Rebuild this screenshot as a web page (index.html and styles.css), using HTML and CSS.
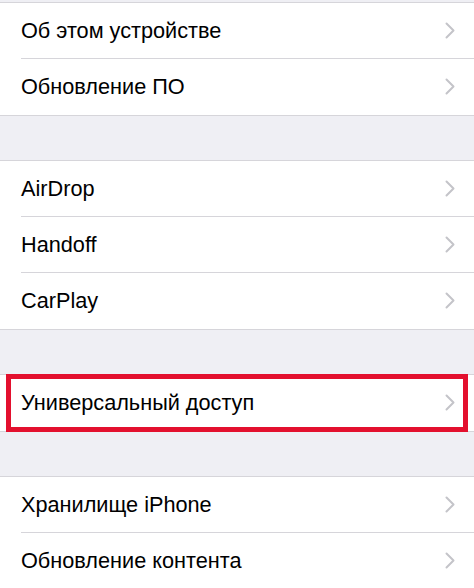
FILE: index.html
```html
<!DOCTYPE html>
<html lang="ru">
<head>
<meta charset="utf-8">
<meta name="viewport" content="width=device-width,initial-scale=1">
<title>Основные</title>
<link rel="stylesheet" href="styles.css">
</head>
<body>

<div class="group">
  <a class="row"><span class="cell">Об этом устройстве<svg class="chev" viewBox="0 0 10 17"><path d="M1.5 1.5l7 7-7 7"/></svg></span></a>
  <a class="row"><span class="cell">Обновление ПО<svg class="chev" viewBox="0 0 10 17"><path d="M1.5 1.5l7 7-7 7"/></svg></span></a>
</div>

<div class="group">
  <a class="row"><span class="cell">AirDrop<svg class="chev" viewBox="0 0 10 17"><path d="M1.5 1.5l7 7-7 7"/></svg></span></a>
  <a class="row"><span class="cell">Handoff<svg class="chev" viewBox="0 0 10 17"><path d="M1.5 1.5l7 7-7 7"/></svg></span></a>
  <a class="row"><span class="cell">CarPlay<svg class="chev" viewBox="0 0 10 17"><path d="M1.5 1.5l7 7-7 7"/></svg></span></a>
</div>

<div class="group">
  <a class="row marked"><span class="cell">Универсальный доступ<svg class="chev" viewBox="0 0 10 17"><path d="M1.5 1.5l7 7-7 7"/></svg></span></a>
</div>

<div class="group">
  <a class="row"><span class="cell">Хранилище iPhone<svg class="chev" viewBox="0 0 10 17"><path d="M1.5 1.5l7 7-7 7"/></svg></span></a>
  <a class="row"><span class="cell">Обновление контента<svg class="chev" viewBox="0 0 10 17"><path d="M1.5 1.5l7 7-7 7"/></svg></span></a>
</div>

</body>
</html>
```

FILE: styles.css
```css
/* settings list, grouped table look */
*{box-sizing:border-box}
body{margin:0;padding-top:2px;background:#efeff4;
     font-family:"Liberation Sans",Arial,sans-serif;color:#000}

.group{background:#fff;border-top:1px solid #d6d5da;border-bottom:1px solid #d6d5da;
       margin-bottom:44px}
.group:last-child{margin-bottom:0}

.row{display:block;position:relative;padding-left:21px;height:56px}
.cell{display:flex;align-items:center;justify-content:space-between;height:100%;
      padding-right:19px;font-size:21.7px;
      border-bottom:1px solid #d6d5da}
.row:last-child .cell{border-bottom:none;height:55px}

.chev{width:10px;height:17px;fill:none;stroke:#c4c4c9;stroke-width:2;
      stroke-linecap:round;stroke-linejoin:round}

/* red frame drawn over the highlighted row */
.marked::after{content:"";position:absolute;left:6px;right:6px;top:-1px;bottom:-1px;
               border:5px solid #e3102e}
```
